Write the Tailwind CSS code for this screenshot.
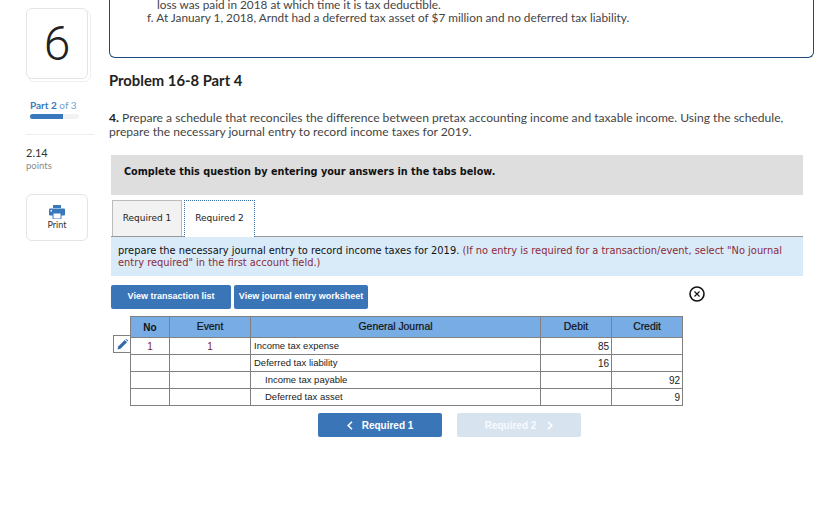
<!DOCTYPE html>
<html lang="en">
<head>
    <meta charset="UTF-8">
    <title>Problem 16-8 Part 4</title>
    <script src="https://cdn.jsdelivr.net/npm/@tailwindcss/browser@4"></script>
</head>
<body class="bg-white w-[820px] h-[512px] overflow-hidden flex font-['Lato',sans-serif] text-[#333]">
    <!-- sidebar -->
    <div class="w-[109px] shrink-0 pl-[26px] pt-2">
        <div class="relative w-[62px] h-[71px]">
            <div class="absolute left-[2px] top-[2px] w-[63px] h-[72px] border border-[#eee] rounded-md bg-white"></div>
            <div class="absolute inset-0 border border-[#e4e4e4] rounded-md bg-white flex items-center justify-center font-['Roboto',sans-serif] text-[48px] leading-none font-light text-[#222]">6</div>
        </div>
        <div class="mt-[19px] pl-1 text-[10px] leading-[14px] text-[#3a78bc]"><span class="font-bold">Part 2</span> <span class="text-[#6f9fd0]">of 3</span></div>
        <div class="ml-1 mt-[2px] w-[49px] h-[5px] rounded-full bg-[#f2f2f2]">
            <div class="w-[33px] h-[5px] rounded-l-full bg-[#3a78bc]"></div>
        </div>
        <div class="w-[68px] border-t border-[#eee] mt-[15px]"></div>
        <div class="mt-[11px] text-[11px] leading-[14px] text-[#333]">2.14</div>
        <div class="text-[9.5px] leading-[12px] text-[#8a8a80]">points</div>
        <div class="mt-[22px] w-[62px] h-[47px] border border-[#e4e4e4] rounded-md flex flex-col items-center pt-[10px]">
            <svg width="16" height="14" viewBox="0 0 16 14">
                <rect x="4" y="0" width="8" height="3" fill="#3a78bc"/>
                <rect x="0" y="3.5" width="16" height="7" rx="1" fill="#3a78bc"/>
                <rect x="4" y="8" width="8" height="6" fill="#fff" stroke="#3a78bc"/>
                <rect x="1.5" y="5" width="1.5" height="1.5" fill="#fff"/>
            </svg>
            <div class="text-[9px] leading-[12px] text-[#333]">Print</div>
        </div>
    </div>

    <!-- main column -->
    <div class="w-[711px] shrink-0 relative">
        <div class="flow-root w-[705px] h-[58px] border-x border-b border-[#1f4a7c] rounded-b-md text-[11.8px] leading-[13px] text-[#444]">
            <div class="pl-[47px] -mt-[2px]">loss was paid in 2018 at which time it is tax deductible.</div>
            <div class="pl-[37px]">f. At January 1, 2018, Arndt had a deferred tax asset of $7 million and no deferred tax liability.</div>
        </div>
        <h2 class="mt-[13px] text-[14.8px] leading-[18px] font-bold text-[#222]">Problem 16-8 Part 4</h2>
        <p class="mt-[22px] text-[12.1px] leading-[14px] text-[#444]"><span class="font-bold text-[#222]">4.</span> Prepare a schedule that reconciles the difference between pretax accounting income and taxable income. Using the schedule,<br>prepare the necessary journal entry to record income taxes for 2019.</p>

        <div class="ml-[2px] mt-[16px] w-[692px] h-[40px] bg-[#dedede] pl-[13px] pt-[10px] font-['DejaVu_Sans',sans-serif] font-bold text-[9.7px] leading-[14px] text-[#111]">Complete this question by entering your answers in the tabs below.</div>

        <!-- tabs -->
        <div class="ml-[2px] mt-[5px] w-[692px] h-[37px] flex gap-[2px] pl-px border-b border-[#999] font-['DejaVu_Sans',sans-serif] text-[9px] text-[#222]">
            <div class="w-[70px] h-[36px] pt-px flex items-center justify-center bg-[#f2f2f2] border border-b-0 border-[#bbb]">Required 1</div>
            <div class="w-[71px] h-[37px] flex items-center justify-center bg-white border border-b-0 border-dotted border-[#3a6ea5]">Required 2</div>
        </div>
        <div class="ml-[2px] w-[692px] h-[39px] bg-[#d9ebf9] px-[7px] pt-[8px] font-['DejaVu_Sans',sans-serif] text-[9.85px] leading-[12px] text-[#111]">prepare the necessary journal entry to record income taxes for 2019. <span class="text-[#8a2a3a]">(If no entry is required for a transaction/event, select "No journal entry required" in the first account field.)</span></div>

        <!-- action buttons -->
        <div class="ml-[2px] mt-[9px] flex gap-[3px] font-['Liberation_Sans',sans-serif] font-bold text-[9px] text-white">
            <div class="w-[120px] h-[24px] rounded-[2px] bg-[#3a75b8] flex items-center justify-center">View transaction list</div>
            <div class="w-[134px] h-[24px] rounded-[2px] bg-[#3a75b8] flex items-center justify-center">View journal entry worksheet</div>
        </div>
        <svg class="absolute left-[580px] top-[286px]" width="16" height="16" viewBox="0 0 16 16" fill="none" stroke="#111">
            <circle cx="8" cy="8" r="7" stroke-width="1.6"/>
            <path d="M5.5 5.5l5 5M10.5 5.5l-5 5" stroke-width="1.1"/>
        </svg>

        <!-- journal table -->
        <div class="relative ml-[21px] mt-[7px] w-[552px] font-['Liberation_Sans',sans-serif] text-[9.5px] text-[#222]">
            <div class="absolute -left-[17px] top-[19px] w-[18px] h-[18px] border border-[#808080] bg-white flex items-center justify-center">
                <svg width="13" height="13" viewBox="0 0 13 13">
                    <path d="M1.5 11.5l.7-3L8.8 2l2.2 2.2-6.5 6.6z" fill="#2f6cb0"/>
                    <path d="M9.5 1.3l.7-.6 2.1 2.1-.6.7z" fill="#2f6cb0"/>
                </svg>
            </div>
            <table class="w-[552px] table-fixed border-collapse">
                <colgroup>
                    <col class="w-[39px]"><col class="w-[81px]"><col class="w-[290px]"><col class="w-[71px]"><col class="w-[71px]">
                </colgroup>
                <thead>
                    <tr class="h-[21px] bg-[#78ace4] text-[#111] text-[10.4px]">
                        <th class="border border-[#808080] font-bold text-[10px]">No</th>
                        <th class="border border-[#808080] font-normal [-webkit-text-stroke:0.2px_#111]">Event</th>
                        <th class="border border-[#808080] font-normal [-webkit-text-stroke:0.2px_#111]">General Journal</th>
                        <th class="border border-[#808080] font-normal [-webkit-text-stroke:0.2px_#111]">Debit</th>
                        <th class="border border-[#808080] font-normal [-webkit-text-stroke:0.2px_#111]">Credit</th>
                    </tr>
                </thead>
                <tbody>
                    <tr class="h-[17px]">
                        <td class="border border-[#808080] text-center text-[#7a2a2a] text-[10px]">1</td>
                        <td class="border border-[#808080] text-center text-[#7a2a2a] text-[10px]">1</td>
                        <td class="border border-[#808080] pl-[3px]">Income tax expense</td>
                        <td class="border border-[#808080] text-right pr-[2px] text-[10px]">85</td>
                        <td class="border border-[#808080]"></td>
                    </tr>
                    <tr class="h-[17px]">
                        <td class="border border-[#808080]"></td>
                        <td class="border border-[#808080]"></td>
                        <td class="border border-[#808080] pl-[3px]">Deferred tax liability</td>
                        <td class="border border-[#808080] text-right pr-[2px] text-[10px]">16</td>
                        <td class="border border-[#808080]"></td>
                    </tr>
                    <tr class="h-[17px]">
                        <td class="border border-[#808080]"></td>
                        <td class="border border-[#808080]"></td>
                        <td class="border border-[#808080] pl-[14px]">Income tax payable</td>
                        <td class="border border-[#808080]"></td>
                        <td class="border border-[#808080] text-right pr-[2px] text-[10px]">92</td>
                    </tr>
                    <tr class="h-[17px]">
                        <td class="border border-[#808080]"></td>
                        <td class="border border-[#808080]"></td>
                        <td class="border border-[#808080] pl-[14px]">Deferred tax asset</td>
                        <td class="border border-[#808080]"></td>
                        <td class="border border-[#808080] text-right pr-[2px] text-[10px]">9</td>
                    </tr>
                </tbody>
            </table>
        </div>

        <!-- prev / next -->
        <div class="ml-[209px] mt-[7px] flex gap-[15px] font-['Liberation_Sans',sans-serif] font-bold text-[10px] text-white">
            <div class="w-[124px] h-[24px] rounded-[2px] bg-[#3a75b8] flex items-center justify-center gap-[9px]">
                <svg width="6" height="9" viewBox="0 0 6 9" fill="none" stroke="#fff" stroke-width="1.6"><path d="M5 .8L1.2 4.5 5 8.2"/></svg>
                <span>Required 1</span>
            </div>
            <div class="w-[124px] h-[24px] rounded-[2px] bg-[#d8e3f0] flex items-center justify-center gap-[11px] text-white/80">
                <span>Required 2</span>
                <svg width="6" height="9" viewBox="0 0 6 9" fill="none" stroke="#fff" stroke-width="1.6"><path d="M1 .8l3.8 3.7L1 8.2"/></svg>
            </div>
        </div>
    </div>
</body>
</html>
